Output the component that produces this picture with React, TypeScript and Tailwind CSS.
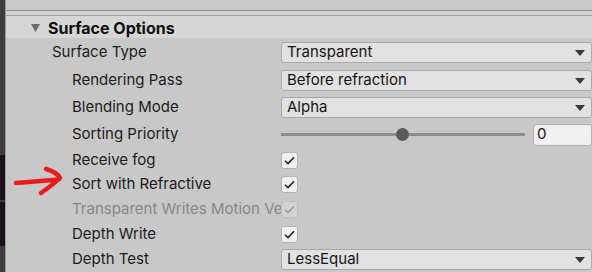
import React from 'react'

const FONT = { fontFamily: 'Inter, "Noto Sans", sans-serif' }

function Dropdown({ value }: { value: string }) {
  return (
    <div className="flex h-[21px] w-[311px] items-center justify-between rounded-[3px] border border-[#a9a9a9] bg-[#e1e1e1] pl-[5px] pr-[6px] text-[15px] text-[#151515]">
      <span>{value}</span>
      <svg width="10" height="6" viewBox="0 0 10 6">
        <path d="M0 0 L10 0 L5 6 Z" fill="#3a3a3a" />
      </svg>
    </div>
  )
}

function Check({ disabled }: { disabled?: boolean }) {
  return (
    <div
      className={`flex h-[17px] w-[17px] items-center justify-center rounded-[3px] border ${
        disabled ? 'border-[#bdbdbd] bg-[#d2d2d2]' : 'border-[#b2b2b2] bg-[#f0f0f0]'
      }`}
    >
      <svg width="11" height="9" viewBox="0 0 11 9">
        <path
          d="M1 4.8 L4 7.6 L10 1.2"
          fill="none"
          stroke={disabled ? '#9a9a9a' : '#1c1c1c'}
          strokeWidth="1.5"
        />
      </svg>
    </div>
  )
}

function Row({
  label,
  indent,
  h,
  dim,
  children,
}: {
  label: string
  indent?: boolean
  h: string
  dim?: boolean
  children: React.ReactNode
}) {
  return (
    <div className={`flex items-center ${h}`}>
      <div
        className={`w-[275px] shrink-0 overflow-hidden whitespace-nowrap text-[15px] ${
          indent ? 'pl-[66px]' : 'pl-[46px]'
        } ${dim ? 'text-[#878787]' : 'text-[#1c1c1c]'}`}
      >
        {label}
      </div>
      <div className="flex flex-1 items-center">{children}</div>
    </div>
  )
}

export default function App() {
  return (
    <div className="flex h-[272px] w-[592px] overflow-hidden bg-[#c8c8c8]" style={FONT}>
      {/* left edge of the neighbouring window */}
      <div className="flex w-[5px] shrink-0 flex-col">
        <div className="h-[155px] bg-[#3d3d3d]" />
        <div className="h-[45px] bg-[#1b0f1c]" />
        <div className="h-[2px] bg-[#3d3d3d]" />
        <div className="h-[44px] bg-[#1b0f1c]" />
        <div className="flex-1 bg-[#3d3d3d]" />
      </div>
      <div className="w-px shrink-0 bg-[#9b9b9b]" />

      <div className="relative flex flex-1 flex-col">
        <div className="h-[11px] border-b border-[#8e8e8e] bg-[#c9c9c9]" />
        <div className="h-[5px] border-b border-[#9e9e9e] bg-[#d3d3d3]" />

        <div className="flex h-[22px] items-center bg-[#d6d6d6] pl-[25px] pt-[2px]">
          <svg width="9" height="8" viewBox="0 0 9 8">
            <path d="M0 0 L9 0 L4.5 8 Z" fill="#6b6b6b" />
          </svg>
          <span className="ml-[8px] text-[16px] font-bold text-[#111]">Surface Options</span>
        </div>

        <Row label="Surface Type" h="h-[29px]">
          <Dropdown value="Transparent" />
        </Row>
        <Row label="Rendering Pass" indent h="h-[27px]">
          <Dropdown value="Before refraction" />
        </Row>
        <Row label="Blending Mode" indent h="h-[27px]">
          <Dropdown value="Alpha" />
        </Row>
        <Row label="Sorting Priority" indent h="h-[27px]">
          <div className="relative flex h-[22px] w-[244px] items-center">
            <div className="h-[3px] w-full bg-[#8d8d8d]" />
            <div className="absolute left-[115px] h-[13px] w-[13px] rounded-full bg-[#5b5b5b]" />
          </div>
          <div className="ml-[8px] flex h-[22px] flex-1 items-center rounded-[3px] border border-[#b0b0b0] bg-[#f0f0f0] pl-[3px] text-[15px] text-[#151515]">
            0
          </div>
        </Row>
        <Row label="Receive fog" indent h="h-[24px]">
          <Check />
        </Row>
        <Row label="Sort with Refractive" indent h="h-[25px]">
          <Check />
        </Row>
        <Row label="Transparent Writes Motion Vectors" indent dim h="h-[25px]">
          <Check disabled />
        </Row>
        <Row label="Depth Write" indent h="h-[25px]">
          <Check />
        </Row>
        <Row label="Depth Test" indent h="h-[25px]">
          <Dropdown value="LessEqual" />
        </Row>

        {/* hand-drawn annotation arrow */}
        <svg
          className="absolute left-[3px] top-[164px]"
          width="60"
          height="36"
          viewBox="0 0 60 36"
        >
          <path
            d="M7 19 L50 15.5 M37 5 C44 7 49 10 51 14 C46 19 39 24 32 29"
            fill="none"
            stroke="#e81c1c"
            strokeWidth="4.5"
            strokeLinecap="round"
            strokeLinejoin="round"
          />
        </svg>
      </div>
    </div>
  )
}
